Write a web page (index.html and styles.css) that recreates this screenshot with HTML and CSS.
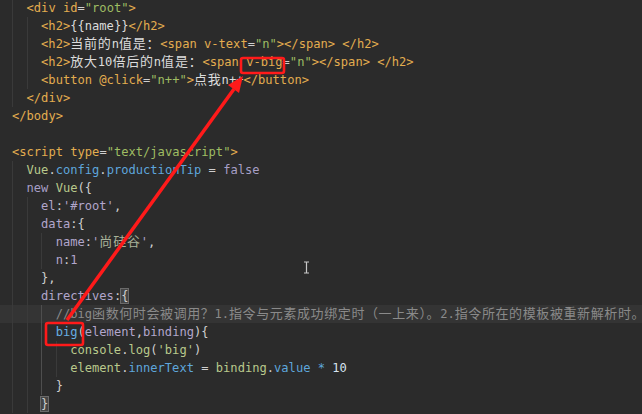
FILE: index.html
```html
<!DOCTYPE html>
<html lang="zh">
  <head>
    <meta charset="UTF-8" />
    <title>directives</title>
    <link rel="stylesheet" href="styles.css">
  </head>
  <body>
    <div class="editor">
      <div class="ln"><span class="i"></span><span class="tg">&lt;div</span> <span class="tg">id</span><span class="op">=</span><span class="st">"root"</span><span class="tg">&gt;</span></div>
      <div class="ln"><span class="i"></span><span class="i"></span><span class="tg">&lt;h2&gt;</span><span class="tx">{{name}}</span><span class="tg">&lt;/h2&gt;</span></div>
      <div class="ln"><span class="i"></span><span class="i"></span><span class="tg">&lt;h2&gt;</span><span class="tx cn">当前的</span><span class="tx">n</span><span class="tx cn">值是：</span><span class="tg">&lt;span</span> <span class="tg">v-text</span><span class="op">=</span><span class="st">"n"</span><span class="tg">&gt;&lt;/span&gt;</span> <span class="tg">&lt;/h2&gt;</span></div>
      <div class="ln"><span class="i"></span><span class="i"></span><span class="tg">&lt;h2&gt;</span><span class="tx cn">放大</span><span class="tx">10</span><span class="tx cn">倍后的</span><span class="tx">n</span><span class="tx cn">值是：</span><span class="tg">&lt;span</span> <span class="tg">v-big</span><span class="op">=</span><span class="st">"n"</span><span class="tg">&gt;&lt;/span&gt;</span> <span class="tg">&lt;/h2&gt;</span></div>
      <div class="ln"><span class="i"></span><span class="i"></span><span class="tg">&lt;button</span> <span class="tg">@click</span><span class="op">=</span><span class="st">"n++"</span><span class="tg">&gt;</span><span class="tx cn">点我</span><span class="tx">n++</span><span class="tg">&lt;/button&gt;</span></div>
      <div class="ln"><span class="i"></span><span class="tg">&lt;/div&gt;</span></div>
      <div class="ln"><span class="tg">&lt;/body&gt;</span></div>
      <div class="ln"></div>
      <div class="ln"><span class="tg">&lt;script</span> <span class="tg">type</span><span class="op">=</span><span class="st">"text/javascript"</span><span class="tg">&gt;</span></div>
      <div class="ln"><span class="i"></span><span class="ob">Vue</span><span class="op">.</span><span class="pr">config</span><span class="op">.</span><span class="pr">productionTip</span> <span class="op">=</span> <span class="kw">false</span></div>
      <div class="ln"><span class="i"></span><span class="kw">new</span> <span class="ob">Vue</span><span class="op">({</span></div>
      <div class="ln"><span class="i"></span><span class="i"></span><span class="ky">el</span><span class="op">:</span><span class="ky">'#root'</span><span class="op">,</span></div>
      <div class="ln"><span class="i"></span><span class="i"></span><span class="ky">data</span><span class="op">:{</span></div>
      <div class="ln"><span class="i"></span><span class="i"></span><span class="i"></span><span class="ky">name</span><span class="op">:</span><span class="ky">'</span><span class="sv cn">尚硅谷</span><span class="ky">'</span><span class="op">,</span></div>
      <div class="ln"><span class="i"></span><span class="i"></span><span class="i"></span><span class="ky">n</span><span class="op">:</span><span class="ky">1</span></div>
      <div class="ln"><span class="i"></span><span class="i"></span><span class="op">},</span></div>
      <div class="ln"><span class="i"></span><span class="i"></span><span class="ky">directives</span><span class="op">:</span><span class="op bm">{</span></div>
      <div class="ln cur"><span class="i"></span><span class="i"></span><span class="i on"></span><span class="cm">//big<span class="cn">函数何时会被调用？</span>1.<span class="cn">指令与元素成功绑定时（一上来）。</span>2.<span class="cn">指令所在的模板被重新解析时。</span></span></div>
      <div class="ln"><span class="i"></span><span class="i"></span><span class="i on"></span><span class="fn">big</span><span class="op">(</span><span class="ky">element</span><span class="op">,</span><span class="ky">binding</span><span class="op">){</span></div>
      <div class="ln"><span class="i"></span><span class="i"></span><span class="i on"></span><span class="i"></span><span class="ob">console</span><span class="op">.</span><span class="ob">log</span><span class="op">(</span><span class="ob">'big'</span><span class="op">)</span></div>
      <div class="ln"><span class="i"></span><span class="i"></span><span class="i on"></span><span class="i"></span><span class="ob">element</span><span class="op">.</span><span class="pr">innerText</span> <span class="op">=</span> <span class="ob">binding</span><span class="op">.</span><span class="pr">value</span> <span class="pr">*</span> <span class="nm">10</span></div>
      <div class="ln"><span class="i"></span><span class="i"></span><span class="i on"></span><span class="op">}</span></div>
      <div class="ln"><span class="i"></span><span class="i"></span><span class="op bm">}</span></div>
    </div>

    <!-- red marks drawn over the code -->
    <svg class="marks" width="642" height="414" viewBox="0 0 642 414">
      <rect x="241" y="58" width="43" height="15" rx="2" fill="none" stroke="#ff1a1a" stroke-width="2.6" />
      <rect x="46" y="323" width="37" height="22" rx="2" fill="none" stroke="#ff1a1a" stroke-width="2.6" />
      <line x1="67" y1="320" x2="234" y2="89" stroke="#ff1a1a" stroke-width="3.5" />
      <polygon points="243,76 239,93 228,85" fill="#ff1a1a" />
      <path d="M304 262h5M306.5 262v11M304 273h5" stroke="#c8c8c8" stroke-width="1.2" fill="none" />
    </svg>
  </body>
</html>
```
FILE: styles.css
```css
body {
  margin: 0;
  background-color: #2b2b2b;
  overflow: hidden;
}
.editor {
  width: 642px;
  height: 414px;
  margin-top: -1px;
  font-family: "DejaVu Sans Mono", "Noto Sans CJK SC", monospace;
  font-size: 12.1px;
  color: #d4d4d4;
}
.ln {
  height: 18px;
  line-height: 18px;
  padding-left: 12px;
  white-space: pre;
  overflow: hidden;
}
.ln.cur {
  background-color: #343434; /* baris aktif */
}
/* garis indentasi, satu per 2 kolom */
.i {
  display: inline-block;
  width: 2ch;
  height: 18px;
  vertical-align: top;
  box-shadow: inset 1px 0 #3a3a3a;
}
.i.on {
  box-shadow: inset 1px 0 #4e4e4e;
}
.cn {
  font-size: 13px;
  letter-spacing: 0.8px;
}
.cm .cn {
  letter-spacing: 0.6px;
}
.tg { color: #e3ad4f; }
.op { color: #cfcfcf; }
.st { color: #9fbd63; }
.tx { color: #dcdcdc; }
.ob { color: #b9c98c; }
.pr { color: #5ea6dc; }
.kw { color: #a79fc6; }
.ky { color: #b2a6cc; }
.sv { color: #a9b39a; }
.fn { color: #66aee3; }
.nm { color: #d6e4f0; }
.cm { color: #8a8a8a; }
.bm {
  background-color: #454545;
  outline: 1px solid #6a6a6a;
}
.marks {
  position: absolute;
  top: 0;
  left: 0;
  pointer-events: none;
}
```
